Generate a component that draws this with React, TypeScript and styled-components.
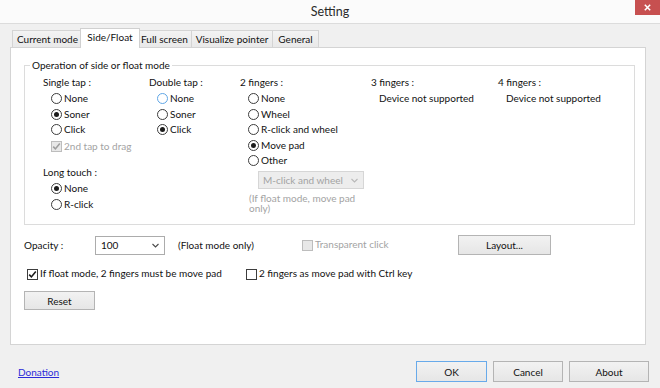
import styled, { createGlobalStyle, css } from 'styled-components';

const GlobalStyle = createGlobalStyle`
  html, body {
    margin: 0;
    padding: 0;
    background: #f0f0f0;
  }
  body {
    font-family: Lato, "Liberation Sans", sans-serif;
    font-size: 10px;
    color: #111;
  }
`;

const Window = styled.div`
  width: 660px;
  height: 388px;
  display: flex;
  flex-direction: column;
  background: #f0f0f0;
  overflow: hidden;
`;

const TitleBar = styled.header`
  flex: none;
  height: 23px;
  display: grid;
  grid-template-columns: 1fr auto 1fr;
  align-items: start;
  background: #fbfbfb;
  border-bottom: 1px solid #dcdcdc;
`;

const Title = styled.h1`
  grid-column: 2;
  margin: 0;
  font-size: 12.5px;
  font-weight: 400;
  line-height: 24px;
  color: #2a2a2a;
`;

const CloseButton = styled.button`
  grid-column: 3;
  justify-self: end;
  width: 25px;
  height: 15px;
  padding: 0;
  border: 0;
  background: #c75050;
  display: flex;
  align-items: center;
  justify-content: center;
`;

const Body = styled.main`
  flex: none;
  display: flex;
  flex-direction: column;
  padding: 4px 14px 0 10px;
`;

const TabList = styled.div`
  display: flex;
  align-items: flex-end;
  height: 19px;
  padding-left: 2px;
`;

const Tab = styled.div<{ $active?: boolean; $w: number }>`
  position: relative;
  box-sizing: border-box;
  width: ${(p) => p.$w}px;
  height: 17px;
  margin-right: -1px;
  border: 1px solid #d4d4d4;
  border-bottom: 0;
  background: linear-gradient(#f3f3f3, #e9e9e9);
  line-height: 16px;
  text-align: center;
  white-space: nowrap;
  color: #111;

  ${(p) =>
    p.$active &&
    css`
      z-index: 1;
      width: ${p.$w + 4}px;
      height: 20px;
      margin: 0 -3px -1px -2px;
      background: #fff;
      border-color: #d0d0d0;
    `}
`;

const Panel = styled.section`
  box-sizing: border-box;
  height: 298px;
  display: flex;
  flex-direction: column;
  padding: 11px 10px 0 13px;
  background: #fff;
  border: 1px solid #d4d4d4;
`;

const GroupBox = styled.fieldset`
  margin: 0;
  padding: 0;
  min-inline-size: 0;
  border: 1px solid #dcdcdc;
`;

const Legend = styled.legend`
  margin-left: 5px;
  padding: 0 2px;
  line-height: 12px;
`;

const Columns = styled.div`
  display: grid;
  grid-template-columns: 106px 91px 131px 127px 1fr;
  align-items: start;
  padding: 3px 0 11px 18px;
`;

const Column = styled.div`
  display: flex;
  flex-direction: column;
  align-items: flex-start;
`;

const Heading = styled.div<{ $gap?: number }>`
  height: 16px;
  line-height: 16px;
  margin-top: ${(p) => p.$gap ?? 0}px;
`;

const Options = styled.div`
  display: flex;
  flex-direction: column;
  align-items: flex-start;
  margin-top: 1px;
  padding-left: 8px;
`;

const Option = styled.label<{ $disabled?: boolean; $w?: number; $gap?: number }>`
  display: flex;
  align-items: center;
  gap: 2px;
  height: 15.5px;
  line-height: 15.5px;
  margin-top: ${(p) => p.$gap ?? 0}px;
  white-space: nowrap;
  color: ${(p) => (p.$disabled ? '#a3a3a3' : '#111')};
  ${(p) => p.$w && `width: ${p.$w}px;`}
`;

const Radio = styled.span<{ $checked?: boolean; $hover?: boolean }>`
  box-sizing: border-box;
  flex: none;
  width: 11px;
  height: 11px;
  border-radius: 50%;
  border: 1px solid ${(p) => (p.$hover ? '#5fa6e6' : '#3d3d3d')};
  background: #fff;
  display: flex;
  align-items: center;
  justify-content: center;

  &::after {
    content: '';
    width: 5px;
    height: 5px;
    border-radius: 50%;
    background: ${(p) => (p.$checked ? '#1b1b1b' : 'transparent')};
  }
`;

const Box = styled.span<{ $disabled?: boolean }>`
  box-sizing: border-box;
  flex: none;
  width: 11px;
  height: 11px;
  border: 1px solid ${(p) => (p.$disabled ? '#bdbdbd' : '#3d3d3d')};
  background: ${(p) => (p.$disabled ? '#e8e8e8' : '#fff')};
  display: flex;
  align-items: center;
  justify-content: center;
`;

const Plain = styled.div`
  height: 15.5px;
  line-height: 15.5px;
  white-space: nowrap;
`;

const Select = styled.div<{ $w: number; $h: number; $disabled?: boolean }>`
  box-sizing: border-box;
  flex: none;
  width: ${(p) => p.$w}px;
  height: ${(p) => p.$h}px;
  display: flex;
  align-items: center;
  justify-content: space-between;
  padding: 0 5px 0 5px;
  border: 1px solid ${(p) => (p.$disabled ? '#d6d6d6' : '#acacac')};
  background: ${(p) => (p.$disabled ? '#ededed' : '#fff')};
  color: ${(p) => (p.$disabled ? '#a3a3a3' : '#111')};
  white-space: nowrap;
`;

const SubSelect = styled(Select)`
  margin: 2.5px 0 0 10px;
  padding-left: 4px;
`;

const Note = styled.div`
  width: 118px;
  margin: 4px 0 0 1px;
  line-height: 10px;
  color: #a3a3a3;
`;

const Row = styled.div<{ $gap: number; $h: number }>`
  display: flex;
  align-items: center;
  height: ${(p) => p.$h}px;
  margin-top: ${(p) => p.$gap}px;
`;

const FieldLabel = styled.span<{ $w: number; $indent?: number }>`
  flex: none;
  width: ${(p) => p.$w}px;
  margin-left: ${(p) => p.$indent ?? 0}px;
  white-space: nowrap;
`;

const Button = styled.button<{ $w: number; $h: number; $default?: boolean }>`
  flex: none;
  box-sizing: border-box;
  width: ${(p) => p.$w}px;
  height: ${(p) => p.$h}px;
  padding: 0;
  border: 1px solid ${(p) => (p.$default ? '#68aaea' : '#b4b4b4')};
  background: linear-gradient(#f2f2f2, #e6e6e6);
  font: inherit;
  color: #111;
`;

const Footer = styled.footer`
  display: flex;
  align-items: center;
  gap: 6px;
  height: 21px;
  padding: 16px 11px 0 18px;
`;

const Link = styled.a`
  margin-right: auto;
  color: #2b2bd8;
  text-decoration: underline;
`;

const Chevron = ({ color }: { color: string }) => (
  <svg width="7" height="5" viewBox="0 0 7 5">
    <polyline points="0.5,1 3.5,4 6.5,1" fill="none" stroke={color} strokeWidth="1.1" />
  </svg>
);

const Check = ({ color }: { color: string }) => (
  <svg width="9" height="9" viewBox="0 0 9 9">
    <polyline points="1.2,4.6 3.4,6.9 7.8,1.6" fill="none" stroke={color} strokeWidth="1.6" />
  </svg>
);

type Choice = { text: string; checked?: boolean; hover?: boolean };

const RadioGroup = ({ items }: { items: Choice[] }) => (
  <>
    {items.map((it) => (
      <Option key={it.text}>
        <Radio $checked={it.checked} $hover={it.hover} />
        {it.text}
      </Option>
    ))}
  </>
);

const CheckOption = ({
  text,
  checked,
  disabled,
  w,
  gap,
}: {
  text: string;
  checked?: boolean;
  disabled?: boolean;
  w?: number;
  gap?: number;
}) => (
  <Option $disabled={disabled} $w={w} $gap={gap}>
    <Box $disabled={disabled}>{checked && <Check color={disabled ? '#9e9e9e' : '#1b1b1b'} />}</Box>
    {text}
  </Option>
);

const tabs = [
  { label: 'Current mode', w: 71 },
  { label: 'Side/Float', w: 56, active: true },
  { label: 'Full screen', w: 55 },
  { label: 'Visualize pointer', w: 82 },
  { label: 'General', w: 47 },
];

export default function App() {
  return (
    <Window>
      <GlobalStyle />
      <TitleBar>
        <Title>Setting</Title>
        <CloseButton aria-label="Close">
          <svg width="7" height="7" viewBox="0 0 7 7">
            <path d="M0.8 0.8 L6.2 6.2 M6.2 0.8 L0.8 6.2" stroke="#fff" strokeWidth="1.5" />
          </svg>
        </CloseButton>
      </TitleBar>

      <Body>
        <TabList>
          {tabs.map((t) => (
            <Tab key={t.label} $w={t.w} $active={t.active}>
              {t.label}
            </Tab>
          ))}
        </TabList>

        <Panel>
          <GroupBox>
            <Legend>Operation of side or float mode</Legend>
            <Columns>
              <Column>
                <Heading>Single tap :</Heading>
                <Options>
                  <RadioGroup items={[{ text: 'None' }, { text: 'Soner', checked: true }, { text: 'Click' }]} />
                  <CheckOption text="2nd tap to drag" checked disabled gap={1.5} />
                </Options>
                <Heading $gap={9.5}>Long touch :</Heading>
                <Options>
                  <RadioGroup items={[{ text: 'None', checked: true }, { text: 'R-click' }]} />
                </Options>
              </Column>

              <Column>
                <Heading>Double tap :</Heading>
                <Options>
                  <RadioGroup items={[{ text: 'None', hover: true }, { text: 'Soner' }, { text: 'Click', checked: true }]} />
                </Options>
              </Column>

              <Column>
                <Heading>2 fingers :</Heading>
                <Options>
                  <RadioGroup
                    items={[
                      { text: 'None' },
                      { text: 'Wheel' },
                      { text: 'R-click and wheel' },
                      { text: 'Move pad', checked: true },
                      { text: 'Other' },
                    ]}
                  />
                  <SubSelect $w={106} $h={18} $disabled>
                    M-click and wheel
                    <Chevron color="#b8b8b8" />
                  </SubSelect>
                  <Note>(If float mode, move pad only)</Note>
                </Options>
              </Column>

              <Column>
                <Heading>3 fingers :</Heading>
                <Options>
                  <Plain>Device not supported</Plain>
                </Options>
              </Column>

              <Column>
                <Heading>4 fingers :</Heading>
                <Options>
                  <Plain>Device not supported</Plain>
                </Options>
              </Column>
            </Columns>
          </GroupBox>

          <Row $gap={9} $h={22}>
            <FieldLabel $w={71}>Opacity :</FieldLabel>
            <Select $w={70} $h={19}>
              100
              <Chevron color="#4a4a4a" />
            </Select>
            <FieldLabel $w={124} $indent={13}>
              (Float mode only)
            </FieldLabel>
            <CheckOption text="Transparent click" disabled w={156} />
            <Button $w={93} $h={20}>
              Layout...
            </Button>
          </Row>

          <Row $gap={10} $h={16}>
            <FieldLabel $w={219} $indent={3}>
              <CheckOption text="If float mode, 2 fingers must be move pad" checked />
            </FieldLabel>
            <CheckOption text="2 fingers as move pad with Ctrl key" />
          </Row>

          <Row $gap={9} $h={19}>
            <Button $w={71} $h={19}>
              Reset
            </Button>
          </Row>
        </Panel>
      </Body>

      <Footer>
        <Link href="#">Donation</Link>
        <Button $w={71} $h={21} $default>
          OK
        </Button>
        <Button $w={70} $h={21}>
          Cancel
        </Button>
        <Button $w={80} $h={21}>
          About
        </Button>
      </Footer>
    </Window>
  );
}
